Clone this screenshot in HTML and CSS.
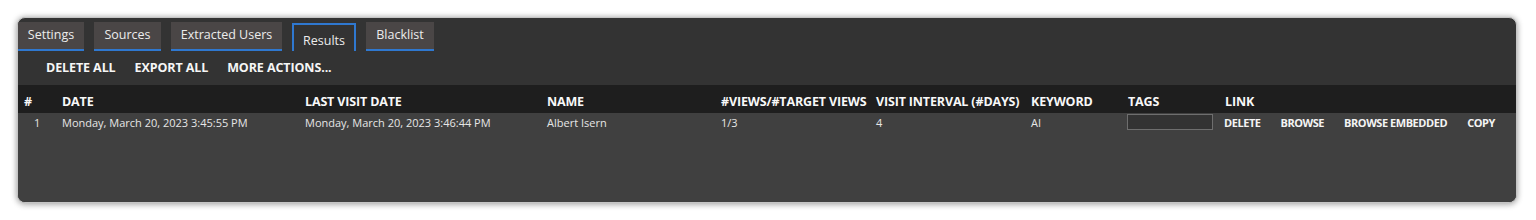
FILE: index.html
```html
<!DOCTYPE html>
<html>
<head>
<meta charset="utf-8">
<link rel="stylesheet" href="styles.css">
</head>
<body>
<div class="window">
  <div class="tabs">
    <div class="tab t-settings">Settings</div>
    <div class="tab t-sources">Sources</div>
    <div class="tab t-extracted">Extracted Users</div>
    <div class="tab tab-active t-results">Results</div>
    <div class="tab t-blacklist">Blacklist</div>
  </div>
  <div class="toolbar">
    <span class="action">DELETE ALL</span>
    <span class="action">EXPORT ALL</span>
    <span class="action">MORE ACTIONS...</span>
  </div>
  <div class="grid">
    <div class="row head">
      <div class="cell c-num">#</div>
      <div class="cell">DATE</div>
      <div class="cell">LAST VISIT DATE</div>
      <div class="cell">NAME</div>
      <div class="cell">#VIEWS/#TARGET VIEWS</div>
      <div class="cell">VISIT INTERVAL (#DAYS)</div>
      <div class="cell">KEYWORD</div>
      <div class="cell">TAGS</div>
      <div class="cell">LINK</div>
    </div>
    <div class="row data">
      <div class="cell c-num-data">1</div>
      <div class="cell">Monday, March 20, 2023 3:45:55 PM</div>
      <div class="cell">Monday, March 20, 2023 3:46:44 PM</div>
      <div class="cell">Albert Isern</div>
      <div class="cell">1/3</div>
      <div class="cell">4</div>
      <div class="cell">AI</div>
      <div class="cell"><input class="tags-input" type="text"></div>
      <div class="cell links">
        <span class="link">DELETE</span>
        <span class="link">BROWSE</span>
        <span class="link">BROWSE EMBEDDED</span>
        <span class="link">COPY</span>
      </div>
    </div>
  </div>
</div>
</body>
</html>
```

FILE: styles.css
```css
* { box-sizing: border-box; }
html, body {
  margin: 0;
  padding: 0;
  background: #ffffff;
}
body {
  padding: 17px 19px 17px 17px;
  font-family: "Open Sans", "Noto Sans", sans-serif;
  color: #ececec;
}
.window {
  height: 186px;
  border: 1px solid #c4c4c4;
  border-radius: 8px;
  background: #333333;
  box-shadow: 0 0 6px rgba(0,0,0,0.28), 0 2px 6px rgba(0,0,0,0.18);
  display: flex;
  flex-direction: column;
  overflow: hidden;
}
.tabs {
  display: flex;
  align-items: flex-end;
  gap: 10px;
  height: 33px;
  padding-top: 4px;
}
.tab {
  height: 29px;
  background: #4a4646;
  border-bottom: 2px solid #2f78d0;
  font-size: 12.5px;
  line-height: 25px;
  text-align: center;
  color: #ececec;
}
.t-settings { width: 66px; }
.t-sources { width: 67px; }
.t-extracted { width: 111px; }
.t-results { width: 64px; }
.t-blacklist { width: 68px; }
.tab-active {
  height: 28px;
  background: #333333;
  border: 2px solid #2f78d0;
  border-bottom: none;
  line-height: 31px;
}
.toolbar {
  display: flex;
  align-items: center;
  gap: 19px;
  height: 34px;
  padding-left: 28px;
  padding-bottom: 1px;
}
.action {
  font-weight: 700;
  font-size: 12.5px;
  letter-spacing: -0.1px;
  color: #f6f6f6;
}
.grid {
  flex: 1;
  background: #404040;
}
.row {
  display: grid;
  grid-template-columns: 44px 243px 242px 174px 155px 155px 97px 97px 1fr;
  align-items: center;
}
.head {
  height: 28px;
  background: #1e1e1e;
  padding-top: 4px;
}
.head .cell {
  font-weight: 700;
  font-size: 12.5px;
  letter-spacing: -0.15px;
  color: #f8f8f8;
  white-space: nowrap;
}
.c-num { padding-left: 6px; }
.data {
  height: 18px;
}
.data .cell {
  font-size: 11px;
  color: #e6e6e6;
  white-space: nowrap;
}
.c-num-data { padding-left: 16px; }
.tags-input {
  display: block;
  width: 86px;
  height: 16px;
  margin-left: -1px;
  background: #333333;
  border: 1px solid #6e6e6e;
  padding: 0;
}
.links {
  display: flex;
  gap: 20px;
  margin-left: -1px;
}
.link {
  font-weight: 700;
  font-size: 11px;
  letter-spacing: -0.45px;
  color: #f4f4f4;
}
```
